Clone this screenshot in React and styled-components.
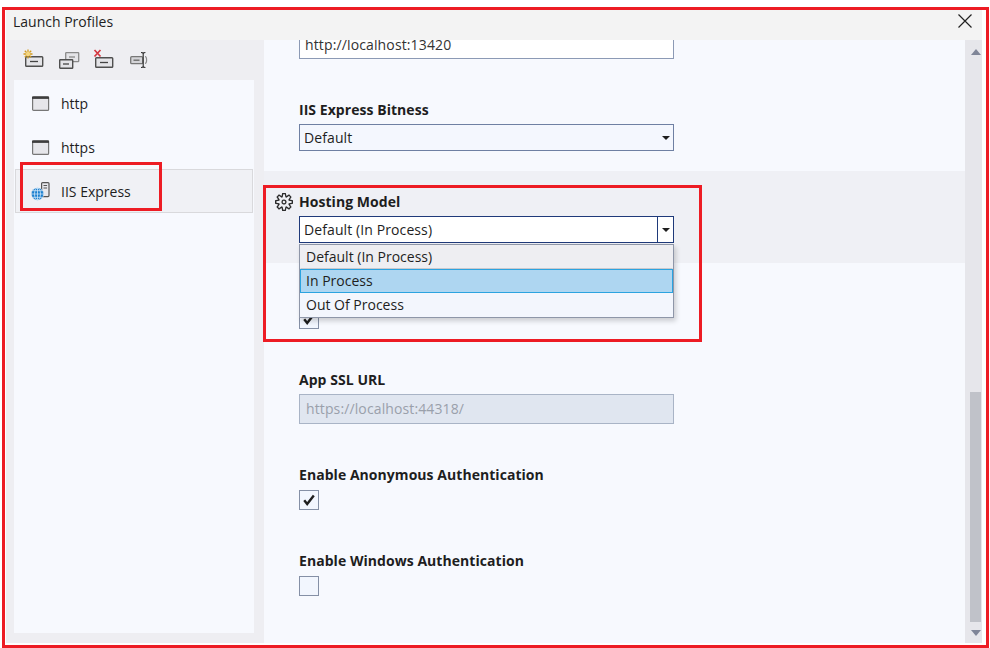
import React from "react";
import styled, { createGlobalStyle } from "styled-components";
import { VscSettingsGear } from "react-icons/vsc";

const Global = createGlobalStyle`
  html, body { margin: 0; padding: 0; background: #fff; }
  body { font-family: "Open Sans", "Noto Sans", sans-serif; font-size: 14px; color: #1e1e1e; }
  * { box-sizing: border-box; }
`;

const Page = styled.div`
  position: relative;
  width: 990px;
  height: 648px;
  padding: 7px 1px 0 2px;
  overflow: hidden;
`;
const Frame = styled.div`
  width: 987px;
  height: 641px;
  border: 3px solid #ed1c24;
  padding: 0 4px 2px 1px;
  display: flex;
  flex-direction: column;
`;
const TitleBar = styled.div`
  height: 30px;
  flex: none;
  background: #f3f3f3;
  display: flex;
  align-items: flex-start;
  justify-content: space-between;
  padding: 2px 9px 0 7px;
  line-height: 19px;
`;
const CloseButton = styled.button`
  width: 16px;
  height: 16px;
  margin-top: 1px;
  padding: 0;
  border: 0;
  background: none;
  display: flex;
`;
const Body = styled.div`
  flex: 1;
  min-height: 0;
  display: flex;
`;
const Sidebar = styled.aside`
  width: 258px;
  flex: none;
  background: #eeeef2;
  padding: 0 10px 10px 8px;
  display: flex;
  flex-direction: column;
`;
const Toolbar = styled.div`
  height: 40px;
  flex: none;
  display: flex;
  gap: 11px;
  padding: 8px 0 0 8px;
`;
const ToolIcon = styled.svg`
  width: 24px;
  height: 24px;
  display: block;
`;
const ProfileList = styled.ul`
  flex: 1;
  margin: 0;
  padding: 1px 1px 0;
  list-style: none;
  background: #f7f9fe;
`;
const ProfileRow = styled.li`
  height: 44px;
  display: flex;
  align-items: center;
  gap: 11px;
  padding-left: 14px;
  border: 1px solid ${p => (p.$selected ? "#d9d9dc" : "transparent")};
  background: ${p => (p.$selected ? "#f0f1f5" : "transparent")};
`;
const RowIcon = styled.svg`
  width: 20px;
  height: 20px;
  flex: none;
`;
const Main = styled.main`
  flex: 1;
  min-width: 0;
  background: #f7f9fe;
  overflow: hidden;
`;
const Scrolled = styled.div`
  margin-top: -1px;
`;
const TopInput = styled.div`
  height: 20px;
  margin: 0 0 20px 35px;
  width: 375px;
  border: 1px solid #8c9ab5;
  border-top: 0;
  background: #fff;
  color: #333;
  padding: 0 5px;
  line-height: 12px;
  letter-spacing: 0.13px;
`;
const Section = styled.section`
  display: grid;
  grid-template-columns: 35px 375px;
  row-gap: 4px;
  align-items: center;
  padding: 21px 0 20px;
  background: ${p => (p.$active ? "#eff0f5" : "transparent")};
`;
const GearCell = styled.span`
  display: flex;
  justify-content: flex-end;
  padding-right: 6px;
  color: #2b2b2b;
`;
const Label = styled.label`
  grid-column: 2;
  font-weight: 700;
  height: 20px;
  line-height: 20px;
  letter-spacing: 0.05px;
`;
const Select = styled.div`
  grid-column: 2;
  position: relative;
  height: 27px;
  display: flex;
  align-items: stretch;
  border: 1px solid ${p => (p.$focused ? "#1f3a7a" : "#6f80a3")};
  background: ${p => (p.$focused ? "#fff" : "#f4f7fe")};
`;
const SelectValue = styled.span`
  flex: 1;
  padding-left: 4px;
  line-height: 25px;
  letter-spacing: 0.1px;
`;
const SelectArrow = styled.span`
  width: 16px;
  flex: none;
  display: flex;
  align-items: center;
  justify-content: center;
  border-left: 1px solid ${p => (p.$focused ? "#1f3a7a" : "transparent")};
  &::after {
    content: "";
    border-left: 4px solid transparent;
    border-right: 4px solid transparent;
    border-top: 4px solid #1e1e1e;
  }
`;
const Dropdown = styled.ul`
  position: absolute;
  z-index: 2;
  top: 27px;
  left: -1px;
  right: -1px;
  margin: 0;
  padding: 0;
  list-style: none;
  border: 1px solid #8e96a8;
  background: #f3f6fd;
  box-shadow: 2px 3px 5px rgba(0, 0, 0, 0.18);
`;
const Option = styled.li`
  height: 24px;
  line-height: 22px;
  padding-left: 5px;
  border: 1px solid transparent;
  ${p => p.$current && "background:#eeeef2;border-bottom-color:#c9c9ce;"}
  ${p => p.$hover && "background:#aed6f1;border-color:#2ba3e0;"}
`;
const Checkbox = styled.span`
  grid-column: 2;
  width: 20px;
  height: 20px;
  margin-top: 1px;
  border: 1px solid #8590a6;
  background: #f2f6fe;
  display: flex;
  align-items: center;
  justify-content: center;
`;
const DisabledInput = styled.div`
  grid-column: 2;
  height: 30px;
  border: 1px solid #a9b4c6;
  background: #e0e6f0;
  color: #9aa0ab;
  padding-left: 6px;
  line-height: 28px;
  letter-spacing: 0.12px;
`;
const Scrollbar = styled.div`
  width: 17px;
  flex: none;
  background: #e6e6eb;
  display: flex;
  flex-direction: column;
  align-items: center;
`;
const ScrollArrow = styled.span`
  flex: none;
  width: 0;
  height: 0;
  margin-left: 5px;
  border-left: 5.5px solid transparent;
  border-right: 5.5px solid transparent;
  ${p => (p.$down
    ? "border-top:6px solid #7f8598;margin:8px 0 7px 5px;"
    : "border-bottom:6px solid #7f8598;margin-top:9px;")}
`;
const Track = styled.div`
  flex: 1;
  display: flex;
  align-items: flex-end;
  padding-left: 5px;
  width: 100%;
`;
const Thumb = styled.div`
  width: 11px;
  height: 230px;
  background: #c0c2c9;
`;
const Annotation = styled.div`
  position: absolute;
  border: 3px solid #ed1c24;
  pointer-events: none;
  z-index: 5;
  left: ${p => p.$x}px;
  top: ${p => p.$y}px;
  width: ${p => p.$w}px;
  height: ${p => p.$h}px;
`;

const box = { fill: "#e4e4e8", stroke: "#4f4f4f", strokeWidth: 1.4 };

const NewIcon = () => (
  <ToolIcon viewBox="0 0 24 24">
    <rect x="3.7" y="8.7" width="17" height="9.6" rx="0.8" {...box} />
    <path d="M8 13.5h8" stroke="#444" strokeWidth="1.3" />
    <path d="M6 1.5v9M1.5 6h9M2.8 2.8l6.4 6.4M9.2 2.8l-6.4 6.4" stroke="#d29b1e" strokeWidth="1.3" />
    <circle cx="6" cy="6" r="2.2" fill="#f5d680" />
  </ToolIcon>
);
const CopyIcon = () => (
  <ToolIcon viewBox="0 0 24 24">
    <rect x="8.7" y="4.7" width="13" height="9" rx="0.6" fill="#e4e4e8" stroke="#8a8a8a" strokeWidth="1.3" />
    <path d="M12 9h6" stroke="#888" strokeWidth="1.3" />
    <rect x="2.7" y="11.7" width="13" height="8.6" rx="0.6" {...box} />
    <path d="M6 16h6" stroke="#444" strokeWidth="1.3" />
  </ToolIcon>
);
const DeleteIcon = () => (
  <ToolIcon viewBox="0 0 24 24">
    <rect x="3.7" y="9.7" width="17" height="9.6" rx="0.8" {...box} />
    <path d="M8 14.5h8" stroke="#444" strokeWidth="1.3" />
    <path d="M2.5 2l6 6.5M8.5 2l-6 6.5" stroke="#d4363f" strokeWidth="1.7" />
  </ToolIcon>
);
const RenameIcon = () => (
  <ToolIcon viewBox="0 0 24 24">
    <rect x="3.7" y="8.7" width="12" height="7" rx="1" fill="#d4d4d8" stroke="#777" strokeWidth="1.3" />
    <path d="M6.5 12.2h6" stroke="#666" strokeWidth="1.3" />
    <path d="M18 8.5c1.2 0 1.6.8 1.6 3.5s-.4 3.5-1.6 3.5" fill="none" stroke="#8a8a8a" strokeWidth="1.2" />
    <path d="M14 4.5c1.4 0 2 .4 2.2 1v13c-.2.6-.8 1-2.2 1M18.4 4.5c-1.4 0-2 .4-2.2 1v13c.2.6.8 1 2.2 1" fill="none" stroke="#2a2a2a" strokeWidth="1.1" />
  </ToolIcon>
);
const WindowIcon = () => (
  <RowIcon viewBox="0 0 20 20">
    <rect x="2.6" y="3.6" width="16" height="13.8" rx="1" fill="#e6e6ea" stroke="#777" strokeWidth="1.2" />
    <path d="M2 4.8h17" stroke="#3d3d3d" strokeWidth="2.2" />
  </RowIcon>
);
const IisIcon = () => (
  <RowIcon viewBox="0 0 20 20">
    <rect x="11.6" y="1.6" width="7.4" height="14" rx="1" fill="#e8e8ec" stroke="#555" strokeWidth="1.2" />
    <path d="M13.5 4.5h3.6M13.5 7h3.6" stroke="#555" strokeWidth="1" />
    <circle cx="7.5" cy="13" r="6.2" fill="#1b7fcf" stroke="#f0f1f5" strokeWidth="0.6" />
    <path d="M1.5 13h12M7.5 7v12M2.7 9.7h9.6M2.7 16.3h9.6" stroke="#cfe6f8" strokeWidth="0.8" />
    <ellipse cx="7.5" cy="13" rx="3" ry="6" fill="none" stroke="#cfe6f8" strokeWidth="0.8" />
  </RowIcon>
);
const CheckMark = () => (
  <svg width="14" height="12" viewBox="0 0 14 12">
    <path d="M2.2 6.2 5.2 10 11.8 1.6" fill="none" stroke="#1e1e1e" strokeWidth="2.4" />
  </svg>
);

export default function App() {
  return (
    <Page>
      <Global />
      <Frame>
        <TitleBar>
          <span>Launch Profiles</span>
          <CloseButton aria-label="Close">
            <svg width="16" height="16" viewBox="0 0 16 16">
              <path d="M1.5 1.5l13 13M14.5 1.5l-13 13" stroke="#222" strokeWidth="1.2" />
            </svg>
          </CloseButton>
        </TitleBar>
        <Body>
          <Sidebar>
            <Toolbar>
              <NewIcon />
              <CopyIcon />
              <DeleteIcon />
              <RenameIcon />
            </Toolbar>
            <ProfileList>
              <ProfileRow><WindowIcon />http</ProfileRow>
              <ProfileRow><WindowIcon />https</ProfileRow>
              <ProfileRow $selected><IisIcon />IIS Express</ProfileRow>
            </ProfileList>
          </Sidebar>
          <Main>
            <Scrolled>
              <TopInput>http://localhost:13420</TopInput>
              <Section>
                <Label>IIS Express Bitness</Label>
                <Select>
                  <SelectValue>Default</SelectValue>
                  <SelectArrow />
                </Select>
              </Section>
              <Section $active>
                <GearCell><VscSettingsGear size={18} /></GearCell>
                <Label>Hosting Model</Label>
                <Select $focused>
                  <SelectValue>Default (In Process)</SelectValue>
                  <SelectArrow $focused />
                  <Dropdown>
                    <Option $current>Default (In Process)</Option>
                    <Option $hover>In Process</Option>
                    <Option>Out Of Process</Option>
                  </Dropdown>
                </Select>
              </Section>
              <Section>
                <Label />
                <Checkbox><CheckMark /></Checkbox>
              </Section>
              <Section>
                <Label>App SSL URL</Label>
                <DisabledInput>https://localhost:44318/</DisabledInput>
              </Section>
              <Section>
                <Label>Enable Anonymous Authentication</Label>
                <Checkbox><CheckMark /></Checkbox>
              </Section>
              <Section>
                <Label>Enable Windows Authentication</Label>
                <Checkbox />
              </Section>
            </Scrolled>
          </Main>
          <Scrollbar>
            <ScrollArrow />
            <Track><Thumb /></Track>
            <ScrollArrow $down />
          </Scrollbar>
        </Body>
      </Frame>
      <Annotation $x={20} $y={162} $w={142} $h={49} />
      <Annotation $x={263} $y={185} $w={439} $h={157} />
    </Page>
  );
}
